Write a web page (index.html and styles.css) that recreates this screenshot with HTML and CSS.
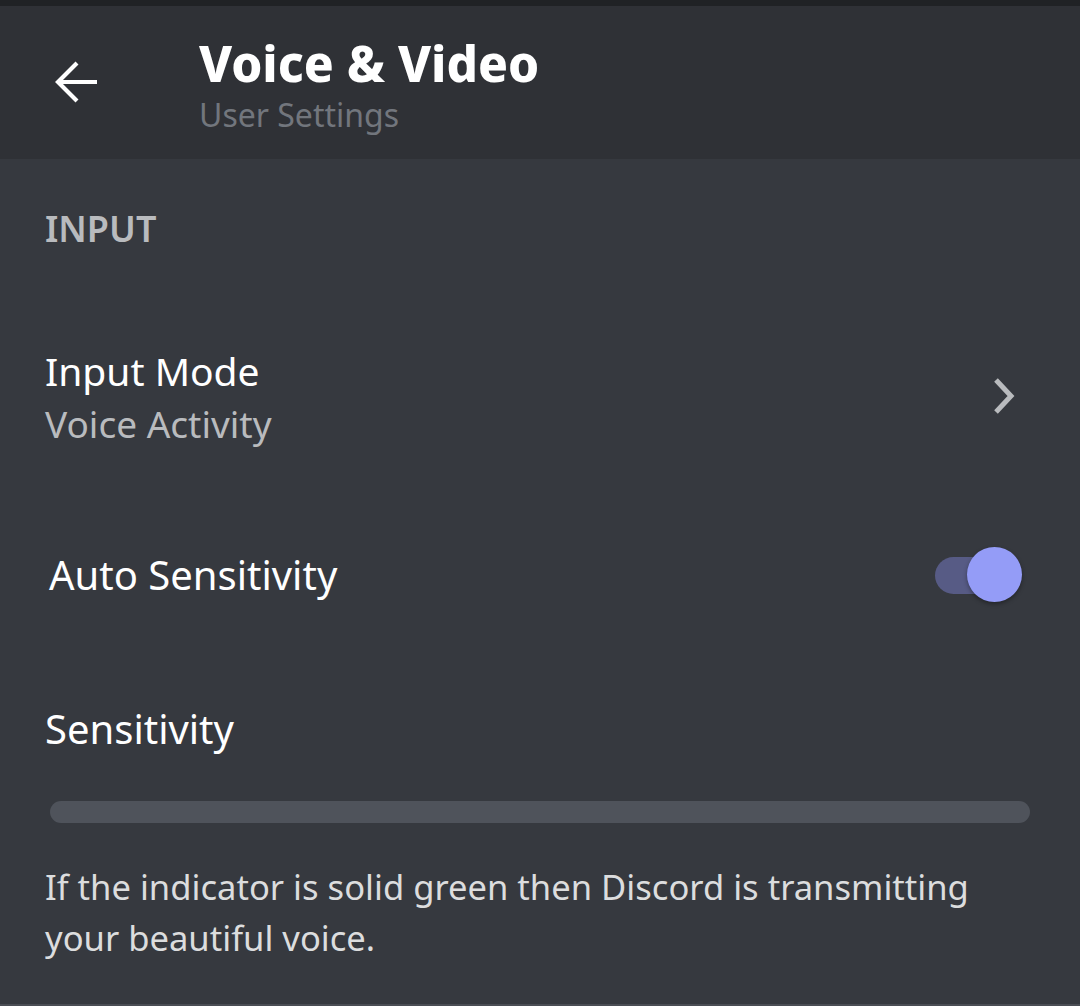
FILE: index.html
```html
<!DOCTYPE html>
<html>
<head>
<meta charset="utf-8">
<link rel="stylesheet" href="styles.css">
</head>
<body>
<div class="app">
  <div class="topstrip"></div>
  <header class="header">
    <div class="back">
      <svg width="48" height="48" viewBox="0 0 48 48"><path d="M44 24H5M24 5L5 24l19 19" fill="none" stroke="#ffffff" stroke-width="4.2" stroke-linecap="butt" stroke-linejoin="miter"/></svg>
    </div>
    <div class="titles">
      <div class="title">Voice &amp; Video</div>
      <div class="subtitle">User Settings</div>
    </div>
  </header>
  <main class="content">
    <div class="section-label">INPUT</div>
    <div class="row row-mode">
      <div class="row-text">
        <div class="row-title mode-title">Input Mode</div>
        <div class="row-sub">Voice Activity</div>
      </div>
      <svg class="chevron" width="22" height="36" viewBox="0 0 22 36"><path d="M3 2l15 16L3 34" fill="none" stroke="#b9bbbe" stroke-width="5"/></svg>
    </div>
    <div class="row row-auto">
      <div class="row-title">Auto Sensitivity</div>
      <div class="toggle">
        <div class="track"></div>
        <div class="knob"></div>
      </div>
    </div>
    <div class="row-title sens">Sensitivity</div>
    <div class="slider"></div>
    <p class="note">If the indicator is solid green then Discord is transmitting your beautiful voice.</p>
  </main>
</div>
</body>
</html>
```

FILE: styles.css
```css
html, body {
  margin: 0;
  padding: 0;
  background: #36393f;
}
.app {
  width: 1080px;
  height: 1006px;
  display: flex;
  flex-direction: column;
  font-family: "Noto Sans", "Open Sans", sans-serif;
  background: #36393f;
  box-sizing: border-box;
  border-bottom: 2px solid #4a4d54;
  overflow: hidden;
}
.topstrip {
  height: 6px;
  background: #202225;
}
.header {
  height: 153px;
  background: #2f3136;
  display: flex;
  align-items: flex-start;
}
.back {
  width: 48px;
  height: 48px;
  margin: 52px 0 0 53px;
}
.titles {
  margin-left: 98px;
  padding-top: 32px;
}
.title {
  font-family: "Noto Sans", sans-serif;
  font-weight: 800;
  font-size: 49.5px;
  line-height: 50px;
  color: #ffffff;
}
.subtitle {
  font-size: 32px;
  line-height: 40px;
  color: #72767d;
  margin-top: 7px;
}
.content {
  flex: 1;
  padding: 0 45px;
  display: flex;
  flex-direction: column;
}
.section-label {
  margin-top: 46px;
  font-size: 36px;
  line-height: 48px;
  font-weight: 600;
  color: #b9bbbe;
}
.row {
  display: flex;
  align-items: center;
  justify-content: space-between;
}
.row-mode {
  margin-top: 92px;
}
.row-title {
  font-size: 40px;
  line-height: 52px;
  color: #ffffff;
}
.mode-title {
  font-size: 39px;
}
.row-sub {
  font-size: 37px;
  line-height: 54px;
  color: #b9bbbe;
}
.chevron {
  margin-right: 20px;
  margin-top: -4px;
}
.row-auto {
  margin-top: 96px;
  padding-left: 4px;
}
.toggle {
  position: relative;
  width: 88px;
  height: 56px;
  margin-right: 12px;
}
.track {
  position: absolute;
  left: 0;
  top: 10px;
  width: 80px;
  height: 37px;
  border-radius: 19px;
  background: #575b85;
}
.knob {
  position: absolute;
  left: 32px;
  top: 0;
  width: 55px;
  height: 55px;
  border-radius: 50%;
  background: #949cf7;
  box-shadow: 0 2px 4px rgba(0,0,0,0.35);
}
.sens {
  margin-top: 100px;
}
.slider {
  margin: 46px 5px 0 5px;
  height: 22px;
  border-radius: 11px;
  background: #4f535b;
}
.note {
  margin: 38px 0 0 0;
  font-size: 34.6px;
  line-height: 51px;
  color: #dcddde;
}
```
